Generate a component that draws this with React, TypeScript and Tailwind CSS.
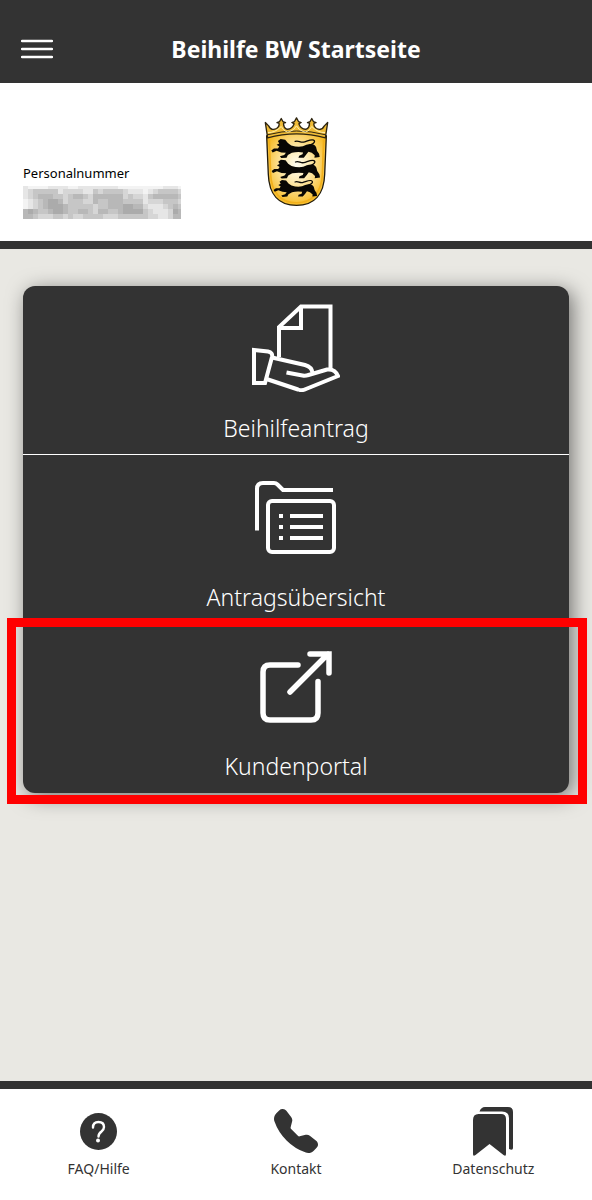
import type { ReactNode } from "react"
import { BsTelephoneFill } from "react-icons/bs"

// Graustufen des unkenntlich gemachten Wertes
const MASK_ROWS = [
  "effffeeeeffeeeeeeeefffffffffeeef",
  "edccccceddddeecdccccdeeefedccccd",
  "edcbbbccdcbbcdbbbbbbdcddecbbbbbc",
  "fedcbaabdcccddbccbbbccccedddcccd",
  "fedcbaaabcccccdccbbbaabbdeeedcbc",
  "babccbaabccbbcdbbccbaaaacdeeedab",
  "bbcdddccdcddccccdddccccccddeedbb",
]

const MASK_FILL: Record<string, string> = {
  a: "#ababab",
  b: "#b8b8b8",
  c: "#c6c6c6",
  d: "#d6d6d6",
  e: "#e6e6e6",
  f: "#f3f3f3",
}

const LION =
  "M82 106L90 100L104 102L112 112L122 119Q150 128 168 117Q190 110 197 124Q198 136 206 144L208 154L192 156L193 149L184 141L174 138L168 146L160 156L144 156L146 150L156 146L158 140Q140 138 124 141L112 148L108 156L92 157L88 152L101 148L106 141L92 140L78 135L66 140L62 134L70 128L82 128L86 122L78 117L86 113Z"

function MaskedNumber() {
  return (
    <svg viewBox="0 0 158 33" className="block h-[33px] w-[158px]" role="img" aria-label="Personalnummer verborgen" shapeRendering="crispEdges">
      {MASK_ROWS.map((row, y) =>
        row.split("").map((cell, x) => (
          <rect key={`${x}-${y}`} x={x * 5} y={y === 0 ? 0 : y * 5 - 2} width={5} height={5} fill={MASK_FILL[cell]} />
        ))
      )}
    </svg>
  )
}

function Crest() {
  return (
    <svg viewBox="40 34 196 270" className="block h-[90px] w-[65px]" role="img" aria-label="Wappen Baden-Württemberg">
      <defs>
        <radialGradient id="gold" cx="50%" cy="45%" r="58%">
          <stop offset="0" stopColor="#fffdf2" />
          <stop offset="0.4" stopColor="#fdeab0" />
          <stop offset="1" stopColor="#f6b81c" />
        </radialGradient>
      </defs>
      {/* Schild */}
      <path d="M48 90q90-24 180 0l-5 116c-2 60-31 94-85 94s-83-34-85-94z" fill="url(#gold)" stroke="#211b0d" strokeWidth="4" />
      <path d="M56 101l4 105c2 52 29 86 78 86s76-34 78-86l4-105" fill="none" stroke="#f2b01c" strokeWidth="5" />
      {/* Krone */}
      <path
        d="M51 96L44 50L54 60Q62 76 78 68Q88 62 85 52L79 50L87 47L92 38L97 47L105 50L99 52Q98 64 108 70Q124 72 131 54L124 50L132 47L138 36L144 47L152 50L145 54Q152 72 168 70Q178 64 177 52L171 50L179 47L184 38L189 47L197 50L191 52Q188 62 198 68Q214 76 222 60L232 50L225 96Q138 72 51 96Z"
        fill="#efbb36"
        stroke="#2d2410"
        strokeWidth="4"
        strokeLinejoin="round"
      />
      <path d="M50 87Q138 64 226 87" fill="none" stroke="#2d2410" strokeWidth="3" />
      <path d="M52 80Q72 82 92 62Q106 84 118 77Q130 74 138 60Q146 74 158 77Q170 84 184 62Q204 82 224 80" fill="none" stroke="#fff0ad" strokeWidth="3" />
      {["translate(0 0)", "translate(1 62)", "translate(13 133) scale(.9)"].map((transform) => (
        <g key={transform} transform={transform}>
          <path d={LION} fill="#080704" />
          <path d="M134 107c10-4 15 4 25 2 14-4 29-12 33-4 3 8-8 10-17 15" fill="none" stroke="#080704" strokeWidth="4" strokeLinecap="round" />
        </g>
      ))}
    </svg>
  )
}

function ApplicationIcon() {
  return (
    <svg viewBox="0 0 88 88" className="size-[88px]" fill="none" stroke="currentColor" strokeWidth="4" aria-hidden="true">
      <path d="M27 53V23L49 2.5H78.5V66M49 3V24H27" />
      <path d="M2 46l14 1.5q5 1 4 5.5L13 79H2z" />
      <path d="M20 53.5L53 61q7 2 7.5 8M34.5 68.5l16 3q3 .5 6-.5L75 65.5q8-1 11 6.5L54 85q-4 2-8 .5L14.5 75" />
    </svg>
  )
}

function OverviewIcon() {
  return (
    <svg viewBox="0 0 88 88" className="size-[88px]" fill="none" stroke="currentColor" strokeWidth="4" aria-hidden="true">
      <path d="M5 57.5V16q0-6 6-6H22q2 0 3.5 1.5L31 17H81" />
      <rect x="16" y="28" width="66" height="51" rx="4" />
      <path d="M27 43h4M27 54h4M27 65h4M38 43h33M38 54h33M38 65h33" />
    </svg>
  )
}

function PortalIcon() {
  return (
    <svg
      viewBox="0 0 88 88"
      className="size-[88px]"
      fill="none"
      stroke="currentColor"
      strokeWidth="5.5"
      strokeLinecap="round"
      aria-hidden="true"
    >
      <path d="M46 23H18q-7 0-7 7v41q0 7 7 7h41q7 0 7-7V39.500M38 50L76 12M58 12h19v19" />
    </svg>
  )
}

function HelpIcon() {
  return (
    <svg viewBox="0 0 37 37" className="size-[37px]" aria-hidden="true">
      <circle cx="18.5" cy="18.5" r="18.5" fill="currentColor" />
      <path d="M13 14.5q0-5.500 5.500-5.500t5.500 5q0 2.500-2.500 4.500-3 2.300-3 5" fill="none" stroke="white" strokeWidth="2.4" strokeLinecap="round" />
      <circle cx="18" cy="27.5" r="2" fill="white" />
    </svg>
  )
}

function PrivacyIcon() {
  return (
    <svg viewBox="0 0 40 50" className="h-[50px] w-[40px]" fill="currentColor" aria-hidden="true">
      <path d="M6.500 5.500Q8 1 12 1h23q5 0 5 5v36q0 3-4 1V12q0-6.500-7-6.500z" />
      <path d="M5.500 8H28q5 0 5 5v35q0 3-2.500 1L16.500 38 2.500 49Q0 51 0 48V14q0-6 5.500-6z" />
    </svg>
  )
}

interface MenuTileProps {
  icon: ReactNode
  label: string
  highlighted?: boolean
}

function MenuTile({ icon, label, highlighted }: MenuTileProps) {
  return (
    <li className="relative border-b border-white last:border-transparent">
      <button type="button" className="flex w-full flex-col items-center gap-5 pt-[18px] pb-[10px] text-white">
        {icon}
        <span className="text-[23px] leading-8 font-light">{label}</span>
      </button>
      {highlighted && (
        <div className="pointer-events-none absolute -top-1.5 -right-[18px] -bottom-3 -left-4 border-9 border-[#ff0000]" />
      )}
    </li>
  )
}

function FooterLink({ icon, label }: { icon: ReactNode; label: string }) {
  return (
    <a href="#" className="flex flex-col items-center gap-[3px]">
      <span className="flex h-[50px] items-center">{icon}</span>
      <span className="text-sm leading-5">{label}</span>
    </a>
  )
}

export default function App() {
  return (
    <div className="flex min-h-screen flex-col bg-[#e9e8e3] font-['Noto_Sans','Open_Sans',sans-serif] text-[#333333]">
      <header className="grid grid-cols-[32px_1fr_32px] items-center bg-[#333333] px-[21px] pt-[31px] pb-4 text-white">
        <button type="button" aria-label="Menü">
          <svg viewBox="0 0 32 20" className="h-5 w-8" stroke="currentColor" strokeWidth="2.5" strokeLinecap="round" aria-hidden="true">
            <path d="M1 2h30M1 10h30M1 18h30" />
          </svg>
        </button>
        <h1 className="text-center text-[23px] leading-9 font-bold">Beihilfe BW Startseite</h1>
      </header>

      <section className="grid grid-cols-[1fr_auto_1fr] border-b-8 border-[#333333] bg-white px-[23px] pt-[34px] pb-[22px]">
        <div className="pt-[46px] text-black">
          <p className="text-[13px] leading-5">Personalnummer</p>
          <div className="mt-[3px]">
            <MaskedNumber />
          </div>
        </div>
        <Crest />
      </section>

      <main className="flex-1 px-[23px] pt-[37px]">
        <ul className="rounded-xl bg-[#333333] shadow-[4px_4px_20px_rgba(0,0,0,0.5)]">
          <MenuTile icon={<ApplicationIcon />} label="Beihilfeantrag" />
          <MenuTile icon={<OverviewIcon />} label="Antragsübersicht" />
          <MenuTile icon={<PortalIcon />} label="Kundenportal" highlighted />
        </ul>
      </main>

      <footer className="border-t-8 border-[#333333] bg-white pt-[17px] pb-[21px]">
        <nav className="grid grid-cols-3">
          <FooterLink icon={<HelpIcon />} label="FAQ/Hilfe" />
          <FooterLink icon={<BsTelephoneFill className="size-11" />} label="Kontakt" />
          <FooterLink icon={<PrivacyIcon />} label="Datenschutz" />
        </nav>
      </footer>
    </div>
  )
}
